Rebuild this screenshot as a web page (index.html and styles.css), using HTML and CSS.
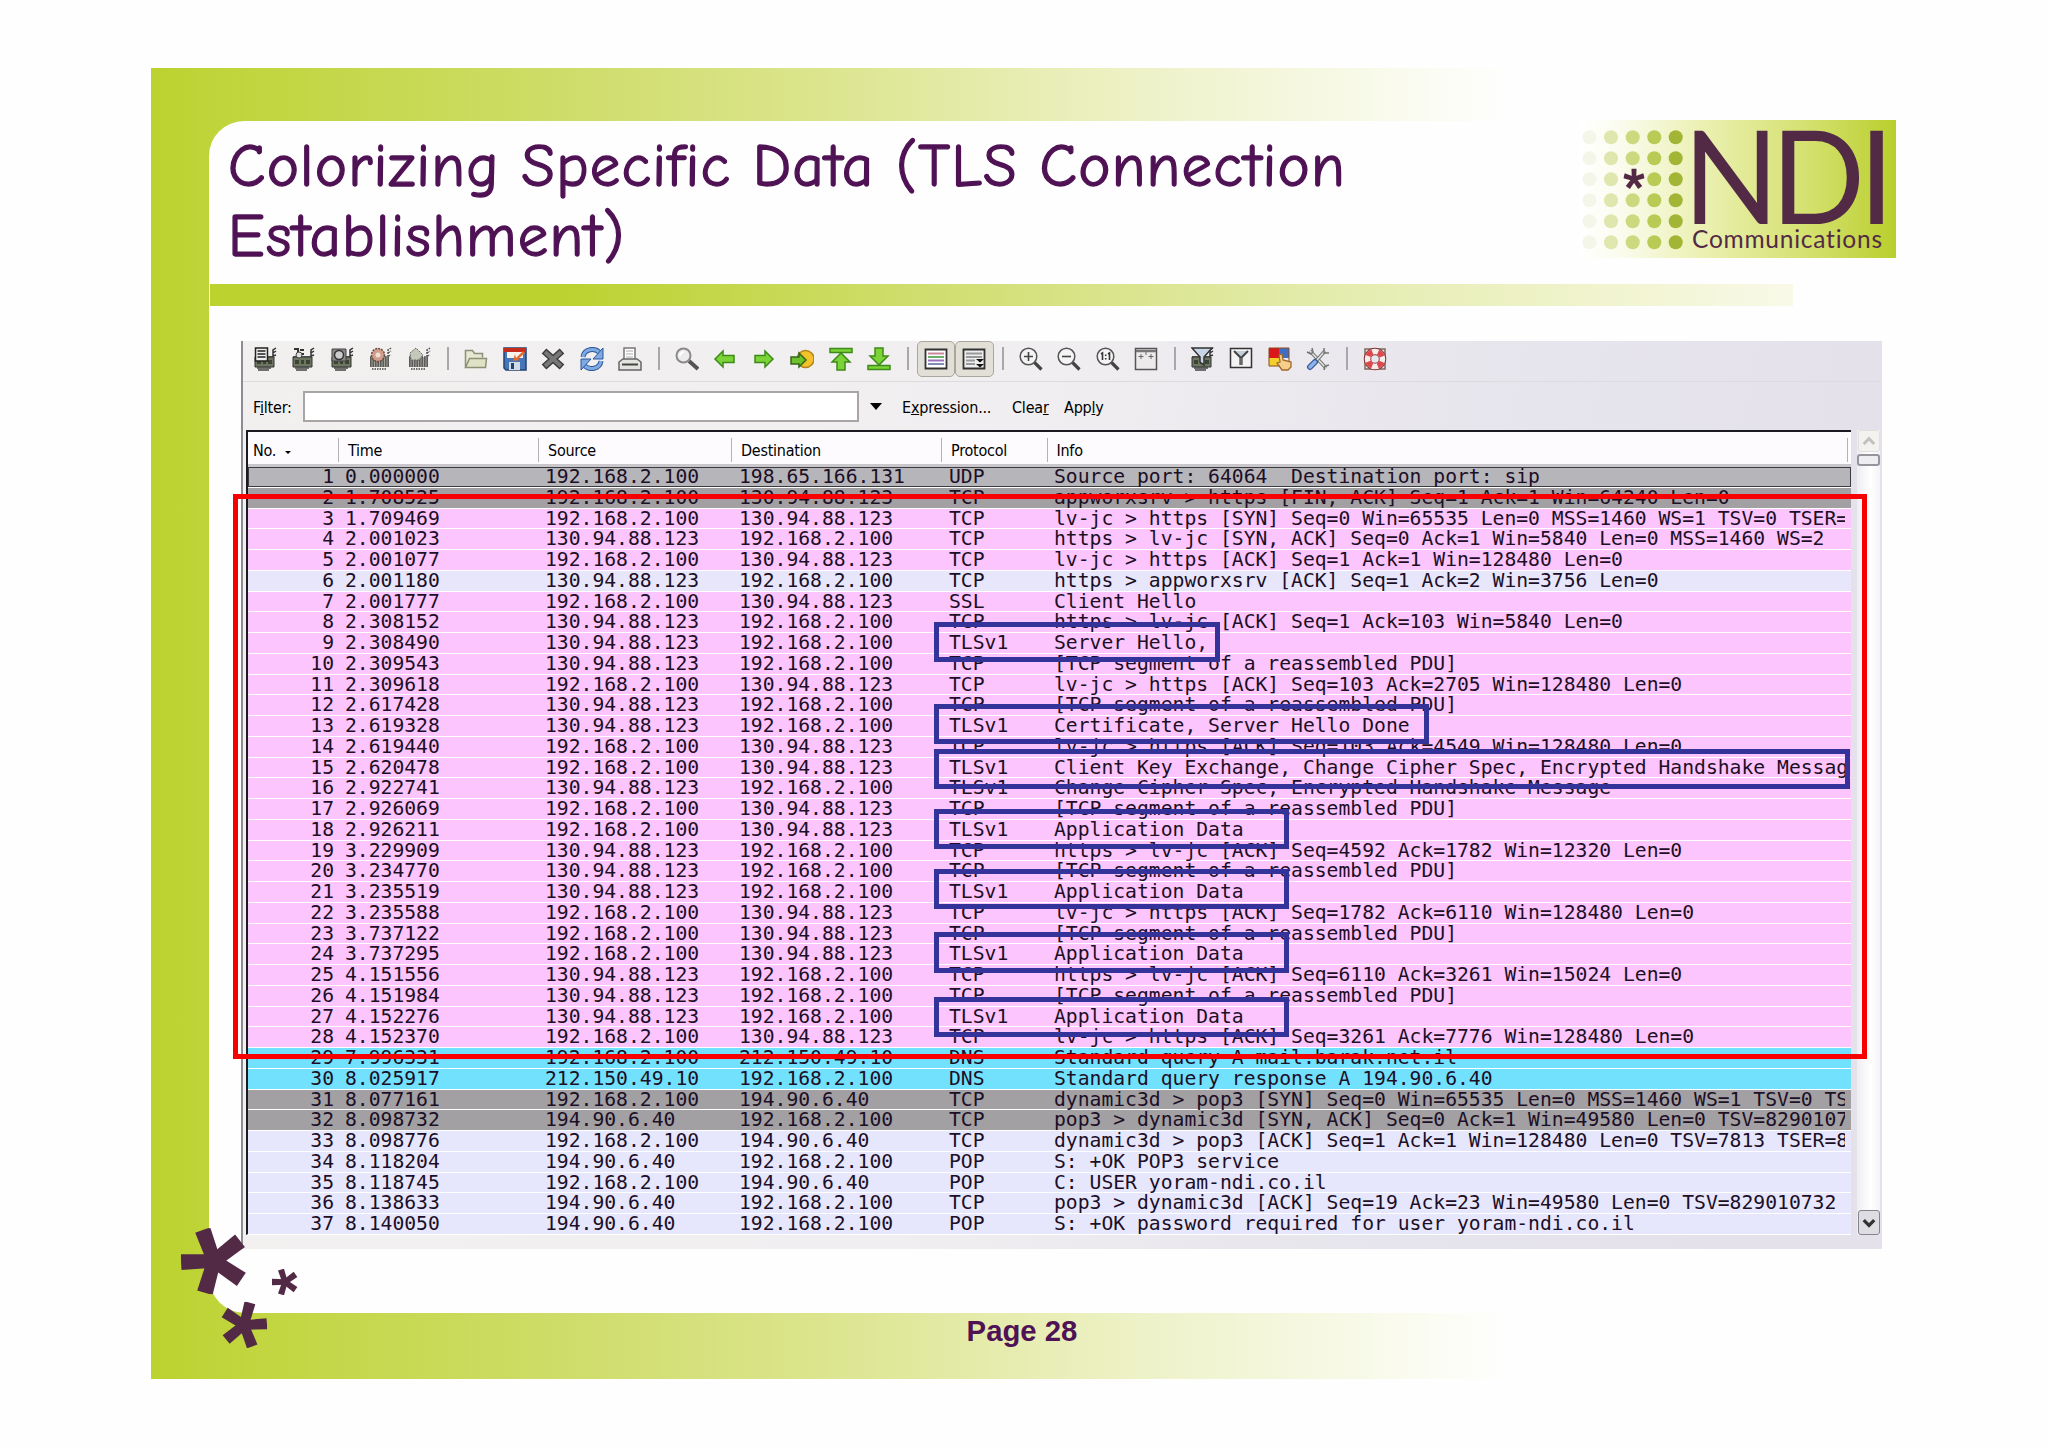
FILE: index.html
```
<!DOCTYPE html>
<html lang="en">
<head>
    <meta charset="UTF-8">
    <meta name="viewport" content="width=device-width, initial-scale=1.0">
    <title>Colorizing Specific Data (TLS Connection Establishment)</title>
    <link rel="stylesheet" href="styles.css">
</head>
<body>
    <!-- shared icon parts -->
    <svg class="defs" width="0" height="0">
        <symbol id="card" viewBox="0 0 24 24">
            <path d="M1 10h18V3l3-2M19 6l3-2M19 9l3-1" fill="none" stroke="#333" stroke-width="1.5"/>
            <path d="M1 10h19v10H1z" fill="#6d7660" stroke="#333"/>
            <path d="M3 21h14M4 23h11" stroke="#444" stroke-width="1.5"/>
            <path d="M3 13h4v4H3zM9 13h3v4H9zM14 13h4v4h-4z" fill="#3c4433"/>
        </symbol>
        <symbol id="card-off" viewBox="0 0 24 24">
            <path d="M1 10h18V3l3-2M19 6l3-2M19 9l3-1" fill="none" stroke="#555" stroke-width="1.5" stroke-dasharray="2 1"/>
            <path d="M1 10h19v10H1z" fill="#a3a39a"/>
            <path d="M1 11h19M1 13h19M1 15h19M1 17h19M1 19h19M3 22h14" stroke="#444" stroke-width="1.3" stroke-dasharray="1.5 1"/>
        </symbol>
        <symbol id="lens" viewBox="0 0 24 24">
            <path d="M15.5 15.5l7 7" stroke="#444" stroke-width="3.2"/>
            <circle cx="9.500" cy="9.500" r="8.300" fill="#f4f4f4" stroke="#555" stroke-width="1.500"/>
        </symbol>
        <symbol id="star" viewBox="-12 -12 24 24">
            <g fill="#532a46">
                <path id="arm" d="M-2.500 0L-2.900-12H2.900L2.500 0z"/>
                <use href="#arm" transform="rotate(72)"/>
                <use href="#arm" transform="rotate(144)"/>
                <use href="#arm" transform="rotate(216)"/>
                <use href="#arm" transform="rotate(288)"/>
            </g>
        </symbol>
    </svg>

    <div class="slide">
        <div class="panel">
            <header class="slide-header">
                <h1>Colorizing Specific Data (TLS Connection<br>Establishment)</h1>
                <svg class="logo" viewBox="0 0 316 138">
                    <defs>
                        <linearGradient id="logo-bg">
                            <stop offset="0" stop-color="#fff"/>
                            <stop offset="0.120" stop-color="#fbfcef"/>
                            <stop offset="0.420" stop-color="#e9efab"/>
                            <stop offset="0.750" stop-color="#d2df69"/>
                            <stop offset="1" stop-color="#b9cf2c"/>
                        </linearGradient>
                        <g id="dots">
                            <circle cy="17.300" r="7"/><circle cy="38.300" r="7"/><circle cy="59.300" r="7"/>
                            <circle cy="80.300" r="7"/><circle cy="101.300" r="7"/><circle cy="122.300" r="7"/>
                        </g>
                    </defs>
                    <rect width="316" height="138" fill="url(#logo-bg)"/>
                    <use href="#dots" x="9.500" fill="#f5f6ea"/>
                    <use href="#dots" x="31" fill="#dfe7ae"/>
                    <g fill="#cbd97f">
                        <circle cx="52.700" cy="17.300" r="7"/><circle cx="52.700" cy="38.300" r="7"/>
                        <circle cx="52.700" cy="80.300" r="7"/><circle cx="52.700" cy="101.300" r="7"/><circle cx="52.700" cy="122.300" r="7"/>
                    </g>
                    <use href="#dots" x="74.300" fill="#b9ca55"/>
                    <use href="#dots" x="95.700" fill="#a3b535"/>
                    <use href="#star" x="43.500" y="48.500" width="21" height="21"/>
                    <g class="logo-name">
                        <text x="103" y="103.700" textLength="96" lengthAdjust="spacingAndGlyphs">N</text>
                        <text x="191" y="103.700" textLength="94" lengthAdjust="spacingAndGlyphs">D</text>
                        <text x="278.500" y="103.700">I</text>
                    </g>
                    <text class="logo-sub" x="112" y="128" textLength="190">Communications</text>
                </svg>
            </header>
            <div class="rule"></div>

            <div class="capture">
                <div class="toolbar">
                    <span class="tool"><svg viewBox="0 0 24 24"><use href="#card"/><path d="M1.500 1h12v13h-12z" fill="#eee" stroke="#222" stroke-width="1.500"/><path d="M3.500 4h8M3.500 7h8M3.500 10h8" stroke="#222" stroke-width="1.500"/></svg></span>
                    <span class="tool"><svg viewBox="0 0 24 24"><use href="#card"/><path d="M2 2h4v8M8 3h4M8 7h4" fill="none" stroke="#333" stroke-width="2"/><circle cx="7" cy="8" r="3" fill="#ddd" stroke="#444"/></svg></span>
                    <span class="tool"><svg viewBox="0 0 24 24"><use href="#card"/><path d="M1 2h14v12H1z" fill="#888" stroke="#444"/><circle cx="8" cy="8" r="4.500" fill="#ccc" stroke="#333" stroke-width="1.500"/></svg></span>
                    <span class="tool"><svg viewBox="0 0 24 24"><use href="#card-off"/><circle cx="9" cy="8" r="6.500" fill="#cf9f8b" stroke="#6a483e" stroke-width="1.500" stroke-dasharray="2 1"/><circle cx="9" cy="8" r="2.500" fill="#f1ddd4"/></svg></span>
                    <span class="tool"><svg viewBox="0 0 24 24"><use href="#card-off"/><path d="M2 6l6-5 7 7-4 5H3z" fill="#c4c8b8" stroke="#666" stroke-dasharray="2 1"/></svg></span>
                    <i class="sep"></i>
                    <span class="tool"><svg viewBox="0 0 24 24"><path d="M1.500 20.500v-17h7l2 3h8v4" fill="#e6e8d0" stroke="#8d8f77" stroke-width="1.500"/><path d="M1.500 20.500l4-9h17l-1 9z" fill="#dfe2c4" stroke="#8d8f77" stroke-width="1.500"/></svg></span>
                    <span class="tool"><svg viewBox="0 0 24 24"><path d="M1 1h22v22H3l-2-2z" fill="#4675b8" stroke="#24426f" stroke-width="1.500"/><path d="M4 2h16v9H4z" fill="#f6f3ee"/><path d="M1 1h22v4H1z" fill="#c62b1c"/><path d="M20 4l-7 7-1-4-2 7 7-1-2-1 7-6z" fill="#e8692c"/><path d="M6 15h11v8H6z" fill="#cfdbe6"/><path d="M8 16h3v6H8z" fill="#24426f"/></svg></span>
                    <span class="tool"><svg viewBox="0 0 24 24"><path d="M3 4l18 16M21 4L3 20" stroke="#3d3d3d" stroke-width="7"/><path d="M4 5l16 14M20 5L4 19" stroke="#777" stroke-width="4"/></svg></span>
                    <span class="tool"><svg viewBox="0 0 24 24"><path d="M3 10c1-8 12-10 17-4" fill="none" stroke="#2b579d" stroke-width="5"/><path d="M3 10c1-8 12-10 17-4" fill="none" stroke="#7fa9e0" stroke-width="3"/><path d="M23 1v11H13z" fill="#7fa9e0" stroke="#2b579d"/><path d="M21 14c-1 8-12 10-17 4" fill="none" stroke="#2b579d" stroke-width="5"/><path d="M21 14c-1 8-12 10-17 4" fill="none" stroke="#7fa9e0" stroke-width="3"/><path d="M1 23V12h10z" fill="#7fa9e0" stroke="#2b579d"/></svg></span>
                    <span class="tool"><svg viewBox="0 0 24 24"><path d="M6 13V1h11v12" fill="#fff" stroke="#777" stroke-width="1.500"/><path d="M8 4h7M8 7h7M8 10h7" stroke="#aaa"/><path d="M1 15l4-3h14l4 3v8H1z" fill="#e3e3e0" stroke="#666" stroke-width="1.500"/><path d="M4 17.500h16" stroke="#444" stroke-width="2"/></svg></span>
                    <i class="sep"></i>
                    <span class="tool"><svg viewBox="0 0 24 24"><path d="M14 14l9 8" stroke="#555" stroke-width="4"/><circle cx="8.500" cy="8.500" r="7" fill="#ececec" stroke="#8a8a8a" stroke-width="2"/><path d="M5 9a4 4 0 014-4" fill="none" stroke="#fff" stroke-width="2"/></svg></span>
                    <span class="tool"><svg viewBox="0 0 24 24"><path d="M2 12l8-8v4.500h11v7H10V20z" fill="#7bd337" stroke="#3c8a18" stroke-width="1.500"/></svg></span>
                    <span class="tool"><svg viewBox="0 0 24 24"><path d="M21 12l-8-8v4.500H3v7h10V20z" fill="#7bd337" stroke="#3c8a18" stroke-width="1.500"/></svg></span>
                    <span class="tool"><svg viewBox="0 0 24 24"><circle cx="15.500" cy="12" r="8.500" fill="#f3c22b" stroke="#b4851a" stroke-width="1.500"/><path d="M16 13l-7-7v4H1v7h8v3z" fill="#6fc02d" stroke="#35651a" stroke-width="1.500"/></svg></span>
                    <span class="tool"><svg viewBox="0 0 24 24"><path d="M1 1.500h22v4H1zM12 6l9 9h-5v8H8v-8H3z" fill="#7bd337" stroke="#3c8a18" stroke-width="1.500"/></svg></span>
                    <span class="tool"><svg viewBox="0 0 24 24"><path d="M1 18.500h22v4H1zM12 18l9-9h-5V1H8v8H3z" fill="#7bd337" stroke="#3c8a18" stroke-width="1.500"/></svg></span>
                    <i class="sep"></i>
                    <span class="tool pressed"><svg viewBox="0 0 24 24"><path d="M1.500 2.500h21v19h-21z" fill="#fff" stroke="#333" stroke-width="1.800"/><path d="M4 6.500h16" stroke="#c98b9b" stroke-width="2"/><path d="M4 10h16" stroke="#68b06c" stroke-width="2"/><path d="M4 13.500h16" stroke="#9a70bd" stroke-width="2"/><path d="M4 17h16" stroke="#7e8fb5" stroke-width="2"/></svg></span>
                    <span class="tool pressed"><svg viewBox="0 0 24 24"><path d="M1.500 2.500h21v19h-21z" fill="#eee" stroke="#333" stroke-width="1.800"/><path d="M4 6.500h16M4 10h16M4 13.500h9M4 17h9" stroke="#999" stroke-width="1.800"/><path d="M14 12h8l-4 3.500zM14 17h8l-4 3.500z" fill="#111"/></svg></span>
                    <i class="sep"></i>
                    <span class="tool"><svg viewBox="0 0 24 24"><use href="#lens"/><path d="M5 9.500h9M9.500 5v9" stroke="#444" stroke-width="1.600"/></svg></span>
                    <span class="tool"><svg viewBox="0 0 24 24"><use href="#lens"/><path d="M5 9.500h9" stroke="#444" stroke-width="1.600"/></svg></span>
                    <span class="tool"><svg viewBox="0 0 24 24"><use href="#lens"/><path d="M5 7l1.500-1v7M12 7l1.500-1v7M9.700 7.500v1.500M9.700 11v1.500" fill="none" stroke="#333" stroke-width="1.600"/></svg></span>
                    <span class="tool"><svg viewBox="0 0 24 24"><path d="M1.500 1.500h21v21h-21z" fill="#eceaea" stroke="#555" stroke-width="1.500"/><path d="M2 4h20" stroke="#777" stroke-width="2.500"/><path d="M4.500 9.500h5M7 7v5M14.500 9.500h5M17 7v5M12 5v3" fill="none" stroke="#666"/></svg></span>
                    <i class="sep"></i>
                    <span class="tool"><svg viewBox="0 0 24 24"><use href="#card"/><path d="M1 1h20l-8 9v8l-4-3v-5z" fill="#c7d6e6" stroke="#333" stroke-width="1.500"/></svg></span>
                    <span class="tool"><svg viewBox="0 0 24 24"><path d="M1.500 1.500h21v19h-21z" fill="#f3f3f3" stroke="#333" stroke-width="1.500"/><path d="M5 4l7 7 7-7" fill="#c3d0da" stroke="#444" stroke-width="2"/><path d="M12 11v7" stroke="#666" stroke-width="3.500"/></svg></span>
                    <span class="tool"><svg viewBox="0 0 24 24"><path d="M1 1h10v10H1z" fill="#d8161b"/><path d="M11 1h10v10H11z" fill="#3d6fc4"/><path d="M1 11h10v8H1z" fill="#f4cf2b"/><path d="M1 1h20v18H1z" fill="none" stroke="#8a4a1c"/><path d="M11 8l3-1 1 6 8 2v5l-3 3h-6l-5-7 3-1z" fill="#f6cf8d" stroke="#a2672a" stroke-width="1.300"/></svg></span>
                    <span class="tool"><svg viewBox="0 0 24 24"><path d="M4 4l16 17" stroke="#777" stroke-width="3.500"/><path d="M4 4l16 17" stroke="#e3e5e5" stroke-width="1.500"/><path d="M19 4L10 14" stroke="#777" stroke-width="3.500"/><path d="M19 4L10 14" stroke="#e3e5e5" stroke-width="1.500"/><path d="M9 15l-5 5" stroke="#31599c" stroke-width="6" stroke-linecap="round"/><path d="M9 15l-5 5" stroke="#8fb3e6" stroke-width="3.500" stroke-linecap="round"/><path d="M1 5l4 2 2-2-1-4M18 1v5h5M18 23l1-4 4-1" fill="none" stroke="#777" stroke-width="1.500"/></svg></span>
                    <i class="sep"></i>
                    <span class="tool"><svg viewBox="0 0 24 24"><path d="M2 2h20v20H2z" fill="none" stroke="#7c6a5c" stroke-width="1.500"/><circle cx="12" cy="12" r="7.500" fill="none" stroke="#8a3a3a" stroke-width="7.500"/><circle cx="12" cy="12" r="7.500" fill="none" stroke="#f4efec" stroke-width="5.500"/><circle cx="12" cy="12" r="7.500" fill="none" stroke="#e0474c" stroke-width="5.500" stroke-dasharray="6 5.780" stroke-dashoffset="-2.900"/></svg></span>
                </div>

                <div class="filterbar">
                    <label for="filter">F<u>i</u>lter:</label>
                    <input type="text" id="filter">
                    <i class="drop"></i>
                    <span class="link expression">E<u>x</u>pression...</span>
                    <span class="link clear">Clea<u>r</u></span>
                    <span class="link">App<u>l</u>y</span>
                </div>

                <div class="list-area">
                    <div class="list">
                        <div class="list-head">
                            <span>No. <i class="sort"></i></span>
                            <span>Time</span>
                            <span>Source</span>
                            <span>Destination</span>
                            <span>Protocol</span>
                            <span>Info</span>
                        </div>
                        <div class="rows" id="rows"></div>
                    </div>
                    <div class="scrollbar">
                        <span class="scroll-btn up"><svg viewBox="0 0 12 8"><path d="M1.500 6.500L6 2l4.500 4.500" fill="none" stroke="#c3c1bd" stroke-width="2.500"/></svg></span>
                        <span class="thumb"></span>
                        <span class="scroll-btn down"><svg viewBox="0 0 12 8"><path d="M1.500 1.500L6 6l4.500-4.500" fill="none" stroke="#333" stroke-width="2.800"/></svg></span>
                    </div>
                </div>
            </div>
        </div>
        <footer>Page 28</footer>

        <!-- highlights over the packet list -->
        <div class="mark session"></div>
        <div class="mark tls hello"></div>
        <div class="mark tls certificate"></div>
        <div class="mark tls key-exchange"></div>
        <div class="mark tls data-1"></div>
        <div class="mark tls data-2"></div>
        <div class="mark tls data-3"></div>
        <div class="mark tls data-4"></div>

        <svg class="star star-big" viewBox="-12 -12 24 24"><use href="#star" x="-12" y="-12" width="24" height="24"/></svg>
        <svg class="star star-mid" viewBox="-12 -12 24 24"><use href="#star" x="-12" y="-12" width="24" height="24"/></svg>
        <svg class="star star-small" viewBox="-12 -12 24 24"><use href="#star" x="-12" y="-12" width="24" height="24"/></svg>
    </div>

    <script src="script.js"></script>
</body>
</html>
```

FILE: styles.css
```
* {
    margin: 0;
    padding: 0;
    box-sizing: border-box;
}

body {
    width: 2048px;
    height: 1448px;
    background: #fefefe;
    overflow: hidden;
}

.defs {
    position: absolute;
}

.slide {
    position: relative;
    width: 1746px;
    height: 1311px;
    margin: 68px 0 0 151px;
    padding: 53px 0 0 58px;
    background: linear-gradient(90deg, #bbd22f 0, #c0d53c 80px, #cddc66 390px, #dce58f 680px, #eef2c9 1000px, #fbfcf2 1280px, #fefefe 1360px);
}

.panel {
    height: 1192px;
    padding-left: 1px;
    background: #fefefe;
    border-radius: 35px 0 0 36px;
}

.slide-header {
    display: flex;
    justify-content: space-between;
    height: 163px;
    padding-left: 18px;
}

h1 {
    padding-top: 10px;
    font-family: "Comic Sans MS", "Comic Neue", Lato, sans-serif;
    font-size: 61px;
    font-weight: 400;
    line-height: 70px;
    letter-spacing: 1.2px;
    font-variant-ligatures: none;
    color: #4f1254;
    white-space: nowrap;
    -webkit-text-stroke: 1.3px #4f1254;
}

.logo {
    width: 316px;
    height: 138px;
    margin: -1px 1px 0 0;
}

.logo-name {
    font-family: Lato, sans-serif;
    font-size: 129px;
    fill: #532a46;
}

.logo-sub {
    font-family: Lato, sans-serif;
    font-size: 24.5px;
    font-variant-ligatures: none;
    fill: #532a46;
}

.rule {
    width: 1583px;
    height: 22px;
    background: linear-gradient(90deg, #bbd22f 0, #bbd22f 350px, #cfdd6c 700px, #e3ebab 1100px, #f1f4cf 1400px, #f8f9e8 1583px);
}

/* capture window */
.capture {
    width: 1641px;
    height: 908px;
    margin: 35px 0 0 31px;
    border-left: 2px solid #8c8c92;
    background: linear-gradient(100deg, #f2f0ef 0, #f0eef0 800px, #e6e4ec 1300px, #e4e1ea 1600px);
}

.toolbar {
    display: flex;
    align-items: center;
    height: 41px;
    padding-left: 3.5px;
    padding-bottom: 5px;
    border-bottom: 1px solid #dedbdc;
}

.tool {
    display: flex;
    justify-content: center;
    align-items: center;
    width: 38.5px;
    height: 36px;
}

.tool svg {
    width: 24px;
    height: 24px;
}

.pressed {
    border: 1.5px solid #aaa69c;
    border-radius: 5px;
    background: #e2e0d6;
}

.sep {
    width: 2px;
    height: 23px;
    margin: 0 8px;
    background: #a9a7a8;
}

.filterbar {
    display: flex;
    align-items: center;
    height: 48px;
    padding-left: 10px;
    font-family: "DejaVu Sans Condensed", "DejaVu Sans", sans-serif;
    font-stretch: condensed;
    font-size: 16px;
    letter-spacing: -0.2px;
    color: #000;
}

.filterbar label {
    width: 50px;
    padding-top: 2px;
}

.filterbar input {
    width: 556px;
    height: 31px;
    border: 2px solid #a9a5a5;
    background: #fff;
}

.drop {
    margin: 0 20px 0 11px;
    border: 6px solid transparent;
    border-top: 7px solid #000;
    border-bottom: 0;
}

.link {
    padding-top: 2px;
}

.expression {
    width: 110px;
}

.clear {
    width: 52px;
}

.list-area {
    display: flex;
    height: 805px;
    padding-left: 3px;
}

.list {
    width: 1605px;
    height: 805px;
    border-top: 2px solid #1b1a20;
    border-left: 2px solid #1b1a20;
    border-bottom: 1px solid #fff;
    overflow: hidden;
}

.list-head {
    display: grid;
    grid-template-columns: 91px 200px 193px 210px 105.5px 1fr;
    align-items: center;
    height: 35px;
    padding-top: 3px;
    border-bottom: 3px solid #c9c7cb;
    background: #fdfbfe;
    font-family: "DejaVu Sans Condensed", "DejaVu Sans", sans-serif;
    font-stretch: condensed;
    font-size: 16px;
    letter-spacing: -0.25px;
}

.list-head span {
    height: 24px;
    padding-left: 9px;
    line-height: 26px;
    border-right: 1px solid #b4b2b6;
}

.list-head span:first-child {
    padding-left: 5px;
}

.list-head span:last-child {
    margin-right: 3px;
}

.sort {
    display: inline-block;
    margin: 0 0 2px 5px;
    border: 3px solid transparent;
    border-top: 3.5px solid #000;
    border-bottom: 0;
}

.row {
    display: grid;
    grid-template-columns: 86px 211px 194px 210px 105px 791px;
    height: 20.76px;
    border-bottom: 1px solid #fff;
    font-family: "DejaVu Sans Mono", monospace;
    font-size: 19.7px;
    line-height: 20.76px;
    color: #1c0f26;
    white-space: pre;
}

.row span:first-child {
    text-align: right;
}

.row span:nth-child(2) {
    padding-left: 11px;
}

.row span:last-child {
    overflow-x: clip;
}

.tcp { background: #fcc5fd; }
.plain { background: #e6e6fd; }
.pale { background: #e7e6fb; }
.dns { background: #72e1fd; }
.gray { background: #a2a0a3; }

.selected {
    background: #b6b5ba;
    box-shadow: inset 0 0 0 1px #3c3b40;
}

.scrollbar {
    display: flex;
    flex-direction: column;
    align-items: center;
    width: 23px;
    margin-left: 6px;
    background: linear-gradient(90deg, #efedf2, #fff 60%, #f4f3f6);
}

.scroll-btn {
    display: flex;
    justify-content: center;
    align-items: center;
    width: 22px;
    height: 22px;
    border: 1px solid #e2e0dc;
    border-radius: 3px;
    background: #f3f2ee;
}

.scroll-btn svg {
    width: 14px;
    height: 10px;
}

.thumb {
    width: 23px;
    height: 12px;
    margin-top: 2px;
    border: 2px solid #96949c;
    border-radius: 3px;
    background: #eeedf2;
}

.down {
    height: 25px;
    margin-top: auto;
    border-color: #85838c;
    background: #dedde4;
}

footer {
    width: 1746px;
    margin-left: -60px;
    padding-top: 1px;
    font: bold 29.3px/34px "Liberation Sans", Arial, sans-serif;
    color: #4f1254;
    text-align: center;
}

/* rectangles drawn over the list */
.mark {
    position: absolute;
}

.session {
    left: 82px;
    top: 426px;
    width: 1634px;
    height: 565px;
    border: 5px solid #f80000;
}

.tls {
    left: 783px;
    width: 355px;
    height: 40px;
    border: 5px solid #33339a;
}

.hello { top: 554px; width: 286px; }
.certificate { top: 636px; width: 495px; }
.key-exchange { top: 681px; width: 916px; }
.data-1 { top: 741px; }
.data-2 { top: 801px; }
.data-3 { top: 864px; height: 41px; }
.data-4 { top: 929px; }

.star {
    position: absolute;
    overflow: visible;
}

.star-big {
    left: 30px;
    top: 1160px;
    width: 66px;
    height: 66px;
    transform: rotate(-92deg);
}

.star-mid {
    left: 70px;
    top: 1234px;
    width: 46px;
    height: 46px;
    transform: rotate(87deg);
}

.star-small {
    left: 121px;
    top: 1201px;
    width: 26px;
    height: 26px;
    transform: rotate(-90deg);
}
```

FILE: script.js
```
const A = '192.168.2.100';
const B = '130.94.88.123';
const DNS = '212.150.49.10';
const POP = '194.90.6.40';
const SEGMENT = '[TCP segment of a reassembled PDU]';

// time, source, destination, protocol, info, row class
const packets = [
    ['0.000000', A, '198.65.166.131', 'UDP', 'Source port: 64064  Destination port: sip', 'selected'],
    ['1.708525', A, B, 'TCP', 'appworxsrv > https [FIN, ACK] Seq=1 Ack=1 Win=64240 Len=0', 'gray'],
    ['1.709469', A, B, 'TCP', 'lv-jc > https [SYN] Seq=0 Win=65535 Len=0 MSS=1460 WS=1 TSV=0 TSER=', 'tcp'],
    ['2.001023', B, A, 'TCP', 'https > lv-jc [SYN, ACK] Seq=0 Ack=1 Win=5840 Len=0 MSS=1460 WS=2', 'tcp'],
    ['2.001077', A, B, 'TCP', 'lv-jc > https [ACK] Seq=1 Ack=1 Win=128480 Len=0', 'tcp'],
    ['2.001180', B, A, 'TCP', 'https > appworxsrv [ACK] Seq=1 Ack=2 Win=3756 Len=0', 'pale'],
    ['2.001777', A, B, 'SSL', 'Client Hello', 'tcp'],
    ['2.308152', B, A, 'TCP', 'https > lv-jc [ACK] Seq=1 Ack=103 Win=5840 Len=0', 'tcp'],
    ['2.308490', B, A, 'TLSv1', 'Server Hello,', 'tcp'],
    ['2.309543', B, A, 'TCP', SEGMENT, 'tcp'],
    ['2.309618', A, B, 'TCP', 'lv-jc > https [ACK] Seq=103 Ack=2705 Win=128480 Len=0', 'tcp'],
    ['2.617428', B, A, 'TCP', SEGMENT, 'tcp'],
    ['2.619328', B, A, 'TLSv1', 'Certificate, Server Hello Done', 'tcp'],
    ['2.619440', A, B, 'TCP', 'lv-jc > https [ACK] Seq=103 Ack=4549 Win=128480 Len=0', 'tcp'],
    ['2.620478', A, B, 'TLSv1', 'Client Key Exchange, Change Cipher Spec, Encrypted Handshake Message', 'tcp'],
    ['2.922741', B, A, 'TLSv1', 'Change Cipher Spec, Encrypted Handshake Message', 'tcp'],
    ['2.926069', A, B, 'TCP', SEGMENT, 'tcp'],
    ['2.926211', A, B, 'TLSv1', 'Application Data', 'tcp'],
    ['3.229909', B, A, 'TCP', 'https > lv-jc [ACK] Seq=4592 Ack=1782 Win=12320 Len=0', 'tcp'],
    ['3.234770', B, A, 'TCP', SEGMENT, 'tcp'],
    ['3.235519', B, A, 'TLSv1', 'Application Data', 'tcp'],
    ['3.235588', A, B, 'TCP', 'lv-jc > https [ACK] Seq=1782 Ack=6110 Win=128480 Len=0', 'tcp'],
    ['3.737122', A, B, 'TCP', SEGMENT, 'tcp'],
    ['3.737295', A, B, 'TLSv1', 'Application Data', 'tcp'],
    ['4.151556', B, A, 'TCP', 'https > lv-jc [ACK] Seq=6110 Ack=3261 Win=15024 Len=0', 'tcp'],
    ['4.151984', B, A, 'TCP', SEGMENT, 'tcp'],
    ['4.152276', B, A, 'TLSv1', 'Application Data', 'tcp'],
    ['4.152370', A, B, 'TCP', 'lv-jc > https [ACK] Seq=3261 Ack=7776 Win=128480 Len=0', 'tcp'],
    ['7.996331', A, DNS, 'DNS', 'Standard query A mail.barak.net.il', 'dns'],
    ['8.025917', DNS, A, 'DNS', 'Standard query response A 194.90.6.40', 'dns'],
    ['8.077161', A, POP, 'TCP', 'dynamic3d > pop3 [SYN] Seq=0 Win=65535 Len=0 MSS=1460 WS=1 TSV=0 TSER=0', 'gray'],
    ['8.098732', POP, A, 'TCP', 'pop3 > dynamic3d [SYN, ACK] Seq=0 Ack=1 Win=49580 Len=0 TSV=829010732', 'gray'],
    ['8.098776', A, POP, 'TCP', 'dynamic3d > pop3 [ACK] Seq=1 Ack=1 Win=128480 Len=0 TSV=7813 TSER=829010732', 'plain'],
    ['8.118204', POP, A, 'POP', 'S: +OK POP3 service', 'plain'],
    ['8.118745', A, POP, 'POP', 'C: USER yoram-ndi.co.il', 'plain'],
    ['8.138633', POP, A, 'TCP', 'pop3 > dynamic3d [ACK] Seq=19 Ack=23 Win=49580 Len=0 TSV=829010732', 'plain'],
    ['8.140050', POP, A, 'POP', 'S: +OK password required for user yoram-ndi.co.il', 'plain']
];

const rows = document.getElementById('rows');

packets.forEach((packet, i) => {
    const row = document.createElement('div');
    row.className = 'row ' + packet[5];
    [i + 1, ...packet.slice(0, 5)].forEach((value) => {
        const cell = document.createElement('span');
        cell.textContent = value;
        row.appendChild(cell);
    });
    rows.appendChild(row);
});
```
